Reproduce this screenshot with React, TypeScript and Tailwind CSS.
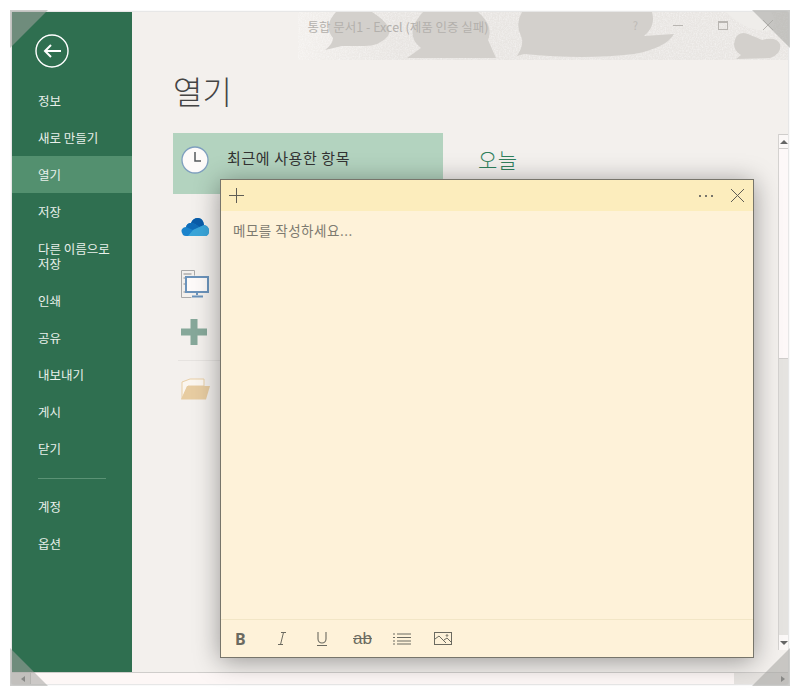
import React from "react";

const font = { fontFamily: '"Noto Sans CJK KR", "Noto Sans", sans-serif' };

function NavItem({ label, active, tall }: { label: React.ReactNode; active?: boolean; tall?: boolean }) {
  return (
    <div
      className={`flex items-center pl-[26px] text-[12.5px] leading-[15px] text-[#e9f0eb] ${tall ? "h-[52px]" : "h-[37px]"} ${active ? "bg-[#53906f]" : ""}`}
    >
      <span>{label}</span>
    </div>
  );
}

function Sidebar() {
  return (
    <div className="w-[120px] h-[660px] shrink-0 bg-[#2f6f50] flex flex-col">
      <div className="h-[70px] pt-[22px] pl-[23px]">
        <svg width="34" height="34" viewBox="0 0 34 34" fill="none" stroke="#ffffff">
          <circle cx="17" cy="17" r="16" strokeWidth="1.4" />
          <path d="M26 17H10M16 11l-6 6 6 6" strokeWidth="2" />
        </svg>
      </div>
      <NavItem label="정보" />
      <NavItem label="새로 만들기" />
      <NavItem label="열기" active />
      <NavItem label="저장" />
      <NavItem label={<>다른 이름으로<br />저장</>} tall />
      <NavItem label="인쇄" />
      <NavItem label="공유" />
      <NavItem label="내보내기" />
      <NavItem label="게시" />
      <NavItem label="닫기" />
      <div className="h-[20px] mt-[1px] flex items-center pl-[26px]">
        <div className="w-[68px] h-px bg-[#5b9275]" />
      </div>
      <NavItem label="계정" />
      <NavItem label="옵션" />
    </div>
  );
}

function TitleDecor() {
  return (
    <svg className="absolute top-0 right-0" width="490" height="48" viewBox="0 0 490 48" fill="#d3d0cc">
      <defs>
        <linearGradient id="fade" x1="0" x2="1" y1="0" y2="0">
          <stop offset="0" stopColor="#f3f0ed" />
          <stop offset="0.2" stopColor="#e8e5e2" />
          <stop offset="1" stopColor="#e9e6e3" />
        </linearGradient>
        <filter id="grain">
          <feTurbulence type="fractalNoise" baseFrequency="0.7" numOctaves="2" seed="4" />
          <feColorMatrix values="0 0 0 0 1  0 0 0 0 1  0 0 0 0 1  0 0 0 1.6 -0.6" />
        </filter>
      </defs>
      <rect width="490" height="48" fill="url(#fade)" />
      <rect width="490" height="48" filter="url(#grain)" opacity="0.55" />
      <path d="M38 0h36q22 14 16 24-8 10-24 10H44L27 38q8-6 8-12-10-12 3-26z" />
      <path d="M125 0h55q16 14 10 28l8 18H109l14-10q-18-14 2-36z" />
      <path d="M224 0h130q4 14-8 24l30-2q-8 14-40 20-50 6-110 0l-7 2q8-12 4-20-6-12 1-24z" />
      <path d="M428 0h44q8 6 2 18-24 4-46-18z" fill="#efedea" />
      <path d="M436 32q2-14 14-10 10 4 14 6 14-4 18 4 2 10-10 14l-34 1 5-4q-7-4-7-11z" />
    </svg>
  );
}

function Clock() {
  return (
    <svg className="-mt-[7px]" width="28" height="28" viewBox="0 0 28 28" fill="none">
      <circle cx="14" cy="14" r="13" fill="#fdfaf9" stroke="#7f9fbf" strokeWidth="1.3" />
      <path d="M14 6v9h6" stroke="#55595c" strokeWidth="1.5" />
    </svg>
  );
}

function Cloud() {
  return (
    <svg width="28" height="20" viewBox="0 0 28 20">
      <path d="M2 18Q0 15 .5 13 2 10 5 10 6 6 10 6 12 1 17 1 22 1 23 8 28 9 28 14 28 18 25 19H5Q3 19 2 18z" fill="#1a83cc" />
      <path d="M10 6Q12 1 17 1 22 1 23 8L18 10Q14 6 10 6z" fill="#0a5ca8" />
      <path d="M5 10Q6 6 10 6 14 6 18 10L12 13z" fill="#0f6cb8" />
      <path d="M12 13 23 8Q28 9 28 14 28 18 25 19H7z" fill="#3aa5d9" />
    </svg>
  );
}

function Pc() {
  return (
    <svg width="28" height="28" viewBox="0 0 28 28" fill="none">
      <path d="M.5 .500h13v5M.5 .500V27.500h10" stroke="#a8a8a8" />
      <path d="M2.500 4h8M2.500 8h2M2.500 14h2M2.500 22h2" stroke="#8a8a8a" />
      <rect x="5" y="7" width="22" height="15" fill="#fdfaf9" stroke="#6b93bb" strokeWidth="2" />
      <path d="M16 22v3M11 26.500h11" stroke="#6b93bb" strokeWidth="2" />
    </svg>
  );
}

function Plus() {
  return (
    <svg width="26" height="26" viewBox="0 0 26 26">
      <path d="M9.500 0h7v9.500H26v7h-9.500V26h-7v-9.500H0v-7h9.500z" fill="#86a89a" />
    </svg>
  );
}

function Folder() {
  return (
    <svg width="29" height="22" viewBox="0 0 29 22">
      <path d="M1 21V4l8-3 14 0v7H7z" fill="#fbf6ef" stroke="#e9cfa6" />
      <path d="M0 21.500 6 8h23l-4 13.500z" fill="#e7cca1" />
    </svg>
  );
}

function NavLocation({ icon, className = "" }: { icon: React.ReactNode; className?: string }) {
  return <div className={`pl-2 flex items-center ${className}`}>{icon}</div>;
}

function Note() {
  return (
    <div className="absolute left-[208px] top-[167px] w-[534px] h-[479px] border border-[#77756b] bg-[#fef2d9] shadow-[0_3px_24px_rgba(0,0,0,0.38)] flex flex-col">
      <div className="h-[31px] bg-[#fcedbd] flex items-center justify-between pl-[8px] pr-[9px] shrink-0">
        <svg width="15" height="15" viewBox="0 0 15 15" stroke="#5f5d55" strokeWidth="1">
          <path d="M7.500 0v15M0 7.500h15" />
        </svg>
        <div className="flex items-center gap-[18px]">
          <span className="flex gap-[4px]">
            <i className="w-[2px] h-[2px] bg-[#77756b]" />
            <i className="w-[2px] h-[2px] bg-[#77756b]" />
            <i className="w-[2px] h-[2px] bg-[#77756b]" />
          </span>
          <svg width="13" height="13" viewBox="0 0 13 13" stroke="#5f5d55" strokeWidth="1">
            <path d="M0 0l13 13M13 0L0 13" />
          </svg>
        </div>
      </div>
      <div className="flex-1 pl-[12px] pt-[10px] text-[13.500px] leading-[18px] text-[#7d7a70] tracking-[0.5px]">메모를 작성하세요...</div>
      <div className="h-[38px] shrink-0 border-t border-[#f2e6c6] flex items-center pl-[14px] text-[#6b6a60]">
        <div className="w-[42px] flex"><span className="font-bold text-[16px] leading-[20px]" style={{ fontFamily: '"Noto Sans", sans-serif' }}>B</span></div>
        <div className="w-[40px] flex">
          <svg width="10" height="13" viewBox="0 0 10 13" fill="none" stroke="#6b6a60"><path d="M4 .500h5M1 12.500h5M6.500 .500l-3 12" /></svg>
        </div>
        <div className="w-[36px] flex">
          <svg width="10" height="15" viewBox="0 0 10 15" fill="none" stroke="#6b6a60" strokeWidth="1.1"><path d="M1 1v7a4 4 0 0 0 8 0V1M0 14.500h10" /></svg>
        </div>
        <div className="w-[40px] flex">
          <span className="line-through text-[17px] leading-[20px]" style={{ fontFamily: '"Liberation Sans", sans-serif' }}>ab</span>
        </div>
        <div className="w-[41px] flex">
          <svg width="18" height="12" viewBox="0 0 18 12" fill="none" stroke="#6b6a60">
            <path d="M4 1h14M4 4.500h14M4 8h14M4 11h14" />
            <path d="M0 1h2M0 4.500h2M0 8h2M0 11h2" />
          </svg>
        </div>
        <svg width="18" height="13" viewBox="0 0 18 13" fill="none" stroke="#6b6a60">
          <rect x=".500" y=".500" width="17" height="12" />
          <path d="M1 7l4-3 7 7M10 8l3-2 4 4" />
          <circle cx="13" cy="3.500" r=".800" />
        </svg>
      </div>
    </div>
  );
}

function Corner({ className, points }: { className: string; points: string }) {
  return (
    <svg className={`absolute ${className}`} width="38" height="38" viewBox="0 0 38 38">
      <polygon points={points} fill="rgba(164,164,160,0.55)" />
    </svg>
  );
}

export default function App() {
  return (
    <div className="relative w-[800px] h-[696px] bg-white pt-[12px] pl-[12px] overflow-hidden" style={font}>
      <div className="relative w-[776px] h-[672px] bg-[#f3f0ed] shadow-[0_0_2px_rgba(0,0,0,0.3)] flex flex-col">
        <div className="flex flex-1 min-h-0">
          <Sidebar />
          <div className="relative flex-1 min-w-0">
            <TitleDecor />
            <div className="relative text-center pt-[6px] pr-[124px] text-[12.500px] leading-[18px] text-[#b3b0ac]">통합 문서1 - Excel (제품 인증 실패)</div>
            <div className="absolute top-[5px] right-[15px] flex items-center gap-[35px]">
              <span className="text-[11px] text-[#bdbab6]">?</span>
              <span className="w-[10px] h-px bg-[#b8b5b1]" />
              <span className="w-[10px] h-[9px] border border-[#b8b5b1] border-t-2" />
              <svg width="10" height="10" viewBox="0 0 10 10" stroke="#b8b5b1"><path d="M0 0l10 10M10 0L0 10" /></svg>
            </div>
            <div className="relative pl-[41px] pt-[30px]">
              <h1 className="text-[32px] leading-[48px] font-light text-[#444444]">열기</h1>
              <div className="flex mt-[19px]">
                <div className="w-[270px]">
                  <div className="h-[61px] bg-[#b3d3bf] flex items-center pl-2 gap-[18px]">
                    <Clock />
                    <span className="text-[15px] text-[#333333] tracking-[0.6px] -mt-[11px]">최근에 사용한 항목</span>
                  </div>
                  <NavLocation icon={<Cloud />} className="h-[20px] mt-[23px]" />
                  <NavLocation icon={<Pc />} className="h-[28px] mt-[33px]" />
                  <NavLocation icon={<Plus />} className="h-[26px] mt-[21px]" />
                  <div className="w-[265px] ml-[5px] h-px bg-[#e6e3e0] mt-[15px]" />
                  <NavLocation icon={<Folder />} className="h-[22px] mt-[17px]" />
                </div>
                <div className="pl-[35px] pt-[11px] text-[21px] leading-[30px] font-light tracking-[0.5px] text-[#2f7f5c]">오늘</div>
              </div>
            </div>
            <div className="absolute right-0 top-[122px] w-[10px] h-[516px] flex flex-col border-l border-[#d4d2d0]">
              <div className="h-[15px] bg-[#fbf8f7] flex items-center justify-center border-b border-[#cfcdcb] border-t border-t-[#cfcdcb]">
                <span className="w-0 h-0 border-x-[4px] border-x-transparent border-b-[4px] border-b-[#666666]" />
              </div>
              <div className="h-[210px] bg-[#fdf8f8] border-b border-[#cfcdcb]" />
              <div className="flex-1 bg-[#e5e3e0] flex flex-col justify-end">
                <div className="h-[15px] bg-[#fbf8f7] flex items-center justify-center">
                  <span className="w-0 h-0 border-x-[4px] border-x-transparent border-t-[4px] border-t-[#666666]" />
                </div>
              </div>
            </div>
          </div>
        </div>
        <div className="h-[12px] shrink-0 border-t border-[#cfcdcb] bg-[#e6e3e0] flex">
          <div className="w-[18px] flex items-center justify-center pl-[3px]"><span className="w-0 h-0 border-y-[3.500px] border-y-transparent border-r-[4px] border-r-[#666666]" /></div>
          <div className="w-[704px] bg-[#fdf7f6] border-l border-[#c9c7c5]" />
          <div className="flex-1 flex items-center justify-end pr-[3px]"><span className="w-0 h-0 border-y-[3.500px] border-y-transparent border-l-[4px] border-l-[#666666]" /></div>
        </div>
        <Note />
      </div>
      <Corner className="left-[10px] top-[10px]" points="0,0 38,0 0,38" />
      <Corner className="right-[10px] top-[10px]" points="0,0 38,0 38,38" />
      <Corner className="left-[10px] top-[648px]" points="0,0 38,38 0,38" />
      <Corner className="right-[10px] top-[648px]" points="38,0 38,38 0,38" />
    </div>
  );
}
